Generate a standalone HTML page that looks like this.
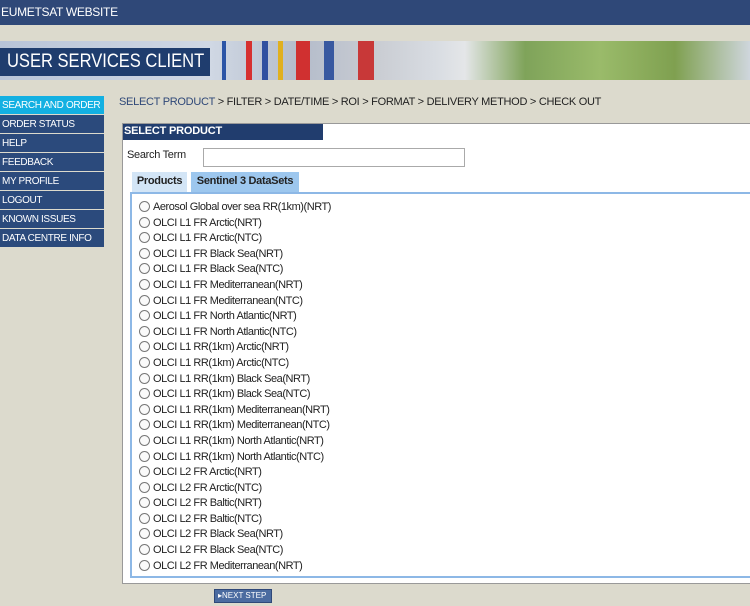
<!DOCTYPE html>
<html><head><meta charset="utf-8"><style>
*{margin:0;padding:0;box-sizing:border-box}
body{width:750px;height:606px;background:#dcdacd;font-family:"Liberation Sans",Arial,sans-serif;position:relative;overflow:hidden}
.top{position:absolute;left:0;top:0;width:750px;height:25px;background:#2f4878;color:#fff;font-size:12px;line-height:25px;padding-left:1px;letter-spacing:-.3px}
.banner{position:absolute;left:0;top:41px;width:750px;height:39px;background:linear-gradient(90deg,#b8c4d8 0,#d0d8e4 28%,#b4bccb 40%,#c9ccd2 50%,#d8dce2 58%,#e4e6e8 62%,#7fa35a 70%,#9abb6a 80%,#7fa050 90%,#cfd6dd 100%)}
.flags{position:absolute;top:0;height:39px}
.btitle{position:absolute;left:0;top:7px;width:210px;height:28px;background:#1f3d6e;color:#fff;font-size:19px;line-height:28px;padding-left:7px;white-space:nowrap;overflow:hidden}
.btitle span{display:inline-block;transform:scaleX(.87);transform-origin:0 50%}
.side{position:absolute;left:0;top:96px;width:104px}
.side div{height:18px;margin-bottom:1px;background:#2b4a7c;color:#fff;font-size:10px;line-height:19px;padding-left:2px;white-space:nowrap;letter-spacing:-.35px;overflow:hidden}
.side div.act{background:#13b0e2}
.crumb{position:absolute;left:119px;top:96px;font-size:11px;line-height:12px;color:#222;letter-spacing:-.28px;white-space:nowrap}
.crumb b{font-weight:normal;color:#2f4878}
.panel{position:absolute;left:122px;top:123px;width:630px;height:461px;background:#fff;border:1px solid #999}
.ph{position:absolute;left:0;top:0;width:200px;height:16px;background:#213d6e;color:#fff;font-size:11px;font-weight:bold;line-height:15px;padding-left:1px;letter-spacing:-.2px}
.st{position:absolute;left:4px;top:25px;font-size:11px;color:#222;letter-spacing:-.3px}
.inp{position:absolute;left:80px;top:24px;width:262px;height:19px;border:1px solid #aaa;background:#fff}
.tab{position:absolute;top:48px;height:20px;font-size:11px;font-weight:bold;line-height:18px;color:#222;text-align:center;letter-spacing:-.3px}
.box{position:absolute;left:7px;top:68px;width:625px;height:386px;border:2px solid #8db8e6;border-right:none}
.list{position:absolute;left:7px;top:6px}
.list div{height:15.6px;font-size:11px;line-height:15px;color:#222;white-space:nowrap;letter-spacing:-.45px}
.list i{display:inline-block;width:11px;height:11px;border:1px solid #777;border-radius:50%;vertical-align:-2px;margin-right:3px;background:#fafafa}
.next{position:absolute;left:214px;top:589px;width:58px;height:14px;background:#4b6ba0;border:1px solid #2f4878;color:#fff;font-size:8px;line-height:12px;padding-left:3px;white-space:nowrap}
</style></head><body>
<div class="top">EUMETSAT WEBSITE</div>
<div class="banner">
<div class="flags" style="left:222px;width:4px;background:#2c55a6"></div>
<div class="flags" style="left:246px;width:6px;background:#d63030"></div>
<div class="flags" style="left:262px;width:6px;background:#3050a0"></div>
<div class="flags" style="left:278px;width:5px;background:#e0b020"></div>
<div class="flags" style="left:296px;width:14px;background:#d03030"></div>
<div class="flags" style="left:324px;width:10px;background:#3858a0"></div>
<div class="flags" style="left:358px;width:16px;background:#c83838"></div>
<div class="btitle"><span>USER SERVICES CLIENT</span></div>
</div>
<div class="side">
<div class="act">SEARCH AND ORDER</div><div>ORDER STATUS</div><div>HELP</div><div>FEEDBACK</div><div>MY PROFILE</div><div>LOGOUT</div><div>KNOWN ISSUES</div><div>DATA CENTRE INFO</div>
</div>
<div class="crumb"><b>SELECT PRODUCT</b> &gt; FILTER &gt; DATE/TIME &gt; ROI &gt; FORMAT &gt; DELIVERY METHOD &gt; CHECK OUT</div>
<div class="panel">
<div class="ph">SELECT PRODUCT</div>
<div class="st">Search Term</div>
<div class="inp"></div>
<div class="tab" style="left:9px;width:55px;background:#d3e5f6">Products</div>
<div class="tab" style="left:68px;width:108px;background:#9dc7ee">Sentinel 3 DataSets</div>
<div class="box"><div class="list">
<div><i></i>Aerosol Global over sea RR(1km)(NRT)</div>
<div><i></i>OLCI L1 FR Arctic(NRT)</div>
<div><i></i>OLCI L1 FR Arctic(NTC)</div>
<div><i></i>OLCI L1 FR Black Sea(NRT)</div>
<div><i></i>OLCI L1 FR Black Sea(NTC)</div>
<div><i></i>OLCI L1 FR Mediterranean(NRT)</div>
<div><i></i>OLCI L1 FR Mediterranean(NTC)</div>
<div><i></i>OLCI L1 FR North Atlantic(NRT)</div>
<div><i></i>OLCI L1 FR North Atlantic(NTC)</div>
<div><i></i>OLCI L1 RR(1km) Arctic(NRT)</div>
<div><i></i>OLCI L1 RR(1km) Arctic(NTC)</div>
<div><i></i>OLCI L1 RR(1km) Black Sea(NRT)</div>
<div><i></i>OLCI L1 RR(1km) Black Sea(NTC)</div>
<div><i></i>OLCI L1 RR(1km) Mediterranean(NRT)</div>
<div><i></i>OLCI L1 RR(1km) Mediterranean(NTC)</div>
<div><i></i>OLCI L1 RR(1km) North Atlantic(NRT)</div>
<div><i></i>OLCI L1 RR(1km) North Atlantic(NTC)</div>
<div><i></i>OLCI L2 FR Arctic(NRT)</div>
<div><i></i>OLCI L2 FR Arctic(NTC)</div>
<div><i></i>OLCI L2 FR Baltic(NRT)</div>
<div><i></i>OLCI L2 FR Baltic(NTC)</div>
<div><i></i>OLCI L2 FR Black Sea(NRT)</div>
<div><i></i>OLCI L2 FR Black Sea(NTC)</div>
<div><i></i>OLCI L2 FR Mediterranean(NRT)</div>
</div></div>
</div>
<div class="next">&#9656;NEXT STEP</div>
</body></html>
